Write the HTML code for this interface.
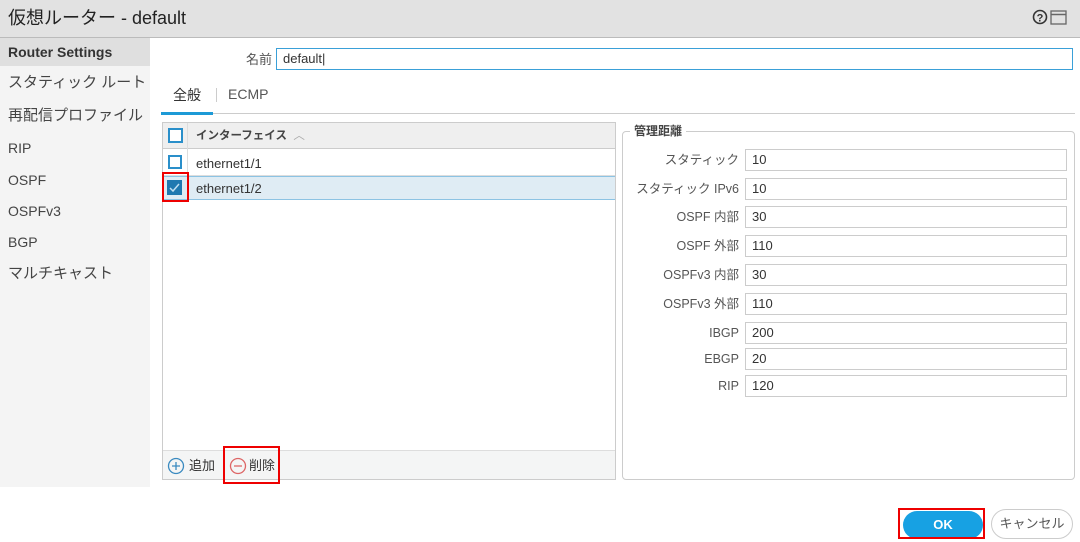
<!DOCTYPE html>
<html><head><meta charset="utf-8"><style>
*{box-sizing:border-box;margin:0;padding:0}
body{width:1080px;height:542px;background:#fff;font-family:"Liberation Sans","Noto Sans CJK JP",sans-serif;color:#333;position:relative;overflow:hidden;font-size:13px;line-height:16px}
.abs{position:absolute}
.hdr{left:0;top:0;width:1080px;height:38px;background:#e2e2e2;border-bottom:1px solid #bbb}
.hdr .t{left:8px;top:7px;font-size:18px;line-height:22px;color:#222}
.side{left:0;top:38px;width:150px;height:449px;background:#f4f4f4}
.side div{position:absolute;left:8px;font-size:15px;line-height:18px;color:#444}
.inp{position:absolute;border:1px solid #ccc;background:#fff;height:22px;font-size:13px;line-height:14px;padding:3px 6px;color:#333}
.lbl{position:absolute;right:341px;font-size:12.5px;line-height:22px;color:#555;text-align:right}
.cb{position:absolute;width:14px;height:14px;border:2px solid #2a8fca;background:#fff}
.red{position:absolute;border:2px solid #e00}
</style></head><body>
<div class="abs hdr"><div class="abs t">仮想ルーター - default</div>
<svg class="abs" style="left:1032px;top:9px" width="40" height="18"><circle cx="8" cy="8" r="6.5" fill="none" stroke="#333" stroke-width="1.6"/><text x="8" y="12.5" font-size="11" font-weight="bold" text-anchor="middle" fill="#333" font-family="Liberation Sans">?</text><rect x="19" y="2" width="15" height="13" fill="none" stroke="#666" stroke-width="1.3"/><line x1="19" y1="5.5" x2="34" y2="5.5" stroke="#666" stroke-width="1.5"/></svg>
</div>
<div class="abs side">
<div style="left:0;top:0;width:150px;height:28px;background:#dfdfdf"></div>
<div style="top:5px;font-weight:bold;font-size:14px;color:#333">Router Settings</div>
<div style="top:36px">スタティック ルート</div>
<div style="top:69px">再配信プロファイル</div>
<div style="top:101px;font-size:14px">RIP</div>
<div style="top:133px;font-size:14px">OSPF</div>
<div style="top:164px;font-size:14px">OSPFv3</div>
<div style="top:195px;font-size:14px">BGP</div>
<div style="top:227px">マルチキャスト</div>
</div>
<div class="abs" style="left:246px;top:52px;font-size:13px;color:#555">名前</div>
<div class="inp" style="left:276px;top:48px;width:797px;border-color:#3aa0d8">default|</div>
<div class="abs" style="left:173px;top:87px;font-size:14px;color:#333">全般</div>
<div class="abs" style="left:216px;top:88px;width:1px;height:14px;background:#ccc"></div>
<div class="abs" style="left:228px;top:86px;font-size:14px;color:#555">ECMP</div>
<div class="abs" style="left:161px;top:113px;width:914px;height:1px;background:#ccc"></div>
<div class="abs" style="left:161px;top:112px;width:52px;height:3px;background:#1d9ad6"></div>
<!-- table -->
<div class="abs" style="left:162px;top:122px;width:454px;height:358px;border:1px solid #ccc;background:#fff"></div>
<div class="abs" style="left:163px;top:123px;width:452px;height:26px;background:#efefef;border-bottom:1px solid #ccc"></div>
<div class="abs" style="left:187px;top:123px;width:1px;height:77px;background:#ddd"></div>
<div class="cb" style="left:168px;top:128px;width:15px;height:15px"></div>
<div class="abs" style="left:196px;top:128px;font-size:11.5px;font-weight:bold;color:#444">インターフェイス &nbsp;<span style="color:#aaa;font-weight:normal">︿</span></div>
<div class="abs" style="left:163px;top:175px;width:452px;height:1px;background:#ddd"></div>
<div class="cb" style="left:168px;top:155px"></div>
<div class="abs" style="left:196px;top:156px;font-size:13px">ethernet1/1</div>
<div class="abs" style="left:163px;top:176px;width:452px;height:24px;background:#dfecf4;border-top:1px solid #8cc3e3;border-bottom:1px solid #8cc3e3"></div>
<div class="abs" style="left:167px;top:180px;width:15px;height:15px;background:#1f79b0"><svg width="15" height="15"><path d="M3 8 L6 11 L12 4" stroke="#bfe0f2" stroke-width="1.5" fill="none"/></svg></div>
<div class="abs" style="left:196px;top:181px;font-size:13px">ethernet1/2</div>
<div class="red" style="left:162px;top:172px;width:27px;height:30px"></div>
<div class="abs" style="left:163px;top:450px;width:452px;height:29px;background:#f4f5f5;border-top:1px solid #ddd"></div>
<svg class="abs" style="left:167px;top:457px" width="18" height="18"><circle cx="9" cy="9" r="7.5" fill="none" stroke="#3a8ac0" stroke-width="1.3"/><path d="M9 5v8M5 9h8" stroke="#3a8ac0" stroke-width="1.3"/></svg>
<div class="abs" style="left:189px;top:458px;font-size:13px">追加</div>
<svg class="abs" style="left:229px;top:457px" width="18" height="18"><circle cx="9" cy="9" r="7.5" fill="none" stroke="#d66" stroke-width="1.3"/><path d="M5 9h8" stroke="#d66" stroke-width="1.3"/></svg>
<div class="abs" style="left:249px;top:458px;font-size:13px">削除</div>
<div class="red" style="left:223px;top:446px;width:57px;height:38px"></div>
<!-- fieldset -->
<div class="abs" style="left:622px;top:131px;width:453px;height:349px;border:1px solid #ccc;border-radius:4px"></div>
<div class="abs" style="left:630px;top:123px;padding:0 4px;background:#fff;font-size:12px;font-weight:bold;color:#444">管理距離</div>
<div class="lbl" style="top:149px">スタティック</div><div class="inp" style="left:745px;top:149px;width:322px">10</div>
<div class="lbl" style="top:178px">スタティック IPv6</div><div class="inp" style="left:745px;top:178px;width:322px">10</div>
<div class="lbl" style="top:206px">OSPF 内部</div><div class="inp" style="left:745px;top:206px;width:322px">30</div>
<div class="lbl" style="top:235px">OSPF 外部</div><div class="inp" style="left:745px;top:235px;width:322px">110</div>
<div class="lbl" style="top:264px">OSPFv3 内部</div><div class="inp" style="left:745px;top:264px;width:322px">30</div>
<div class="lbl" style="top:293px">OSPFv3 外部</div><div class="inp" style="left:745px;top:293px;width:322px">110</div>
<div class="lbl" style="top:322px">IBGP</div><div class="inp" style="left:745px;top:322px;width:322px">200</div>
<div class="lbl" style="top:348px">EBGP</div><div class="inp" style="left:745px;top:348px;width:322px">20</div>
<div class="lbl" style="top:375px">RIP</div><div class="inp" style="left:745px;top:375px;width:322px">120</div>
<!-- buttons -->
<div class="abs" style="left:903px;top:511px;width:80px;height:28px;border-radius:14px;background:#17a1e3;color:#fff;font-weight:bold;font-size:13px;text-align:center;line-height:28px">OK</div>
<div class="red" style="left:898px;top:508px;width:87px;height:31px"></div>
<div class="abs" style="left:991px;top:509px;width:82px;height:30px;border-radius:15px;border:1px solid #ccc;color:#555;font-size:13px;text-align:center;line-height:28px">キャンセル</div>
</body></html>
